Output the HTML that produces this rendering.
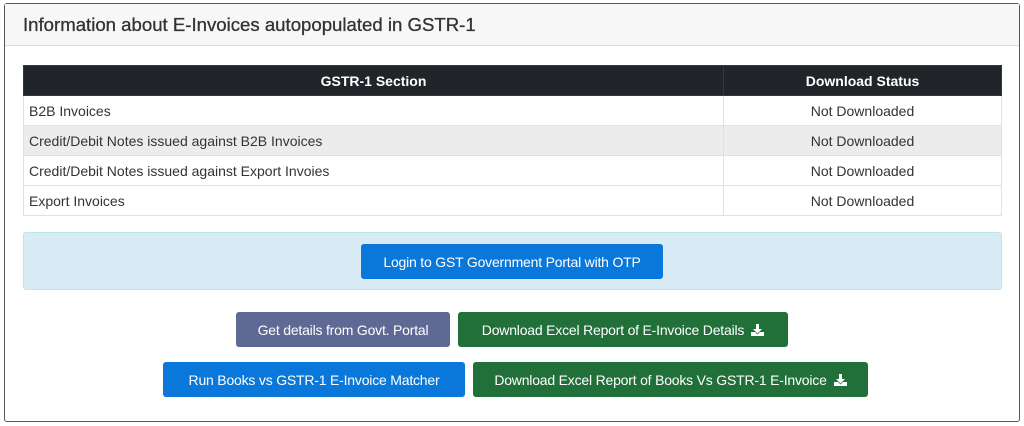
<!DOCTYPE html>
<html><head><style>
*{box-sizing:border-box;margin:0;padding:0}
body{width:1024px;height:426px;background:#fff;font-family:"Liberation Sans",Arial,sans-serif;position:relative;overflow:hidden}
.card{position:absolute;left:4px;top:3px;width:1016px;height:419px;border:1px solid #555;border-radius:3px}
.hd{position:absolute;left:0;top:0;right:0;height:42px;background:#f7f7f7;border-bottom:1px solid #dcdcdc;font-size:18.6px;color:#333;padding:10px 0 0 18px;-webkit-text-stroke:0.3px #333}
table{position:absolute;left:23px;top:65px;width:979px;border-collapse:collapse;font-size:14px;color:#333}
th{background:#212529;color:#fff;height:30px;font-weight:bold;border:1px solid #32383e}
td{height:30px;border:1px solid #dee2e6;padding-left:5px}
td.c{text-align:center;padding:0}
tr.g td{background:#ececec}
.alert{position:absolute;left:23px;top:232px;width:979px;height:58px;background:#d9ecf6;border:1px solid #bee5eb;border-radius:3px}
.btn{position:absolute;height:35px;border-radius:3px;color:#fff;font-size:14px;display:flex;align-items:center;justify-content:center;letter-spacing:-0.2px}
.b{background:#0a78db}.gr{background:#21703a}.gy{background:#5e6994}
svg{margin-left:7px}
</style></head><body>
<div class="card"><div class="hd">Information about E-Invoices autopopulated in GSTR-1</div></div>
<table>
<tr><th style="width:700px">GSTR-1 Section</th><th>Download Status</th></tr>
<tr><td>B2B Invoices</td><td class="c">Not Downloaded</td></tr>
<tr class="g"><td>Credit/Debit Notes issued against B2B Invoices</td><td class="c">Not Downloaded</td></tr>
<tr><td>Credit/Debit Notes issued against Export Invoies</td><td class="c">Not Downloaded</td></tr>
<tr><td>Export Invoices</td><td class="c">Not Downloaded</td></tr>
</table>
<div class="alert"></div>
<div class="btn b" style="left:361px;top:244px;width:302px">Login to GST Government Portal with OTP</div>
<div class="btn gy" style="left:236px;top:312px;width:214px">Get details from Govt. Portal</div>
<div class="btn gr" style="left:458px;top:312px;width:330px">Download Excel Report of E-Invoice Details<svg width="13" height="12" viewBox="0 0 13 12"><path d="M5 0h3v5h3L6.5 9.5 2 5h3z M0 8h4l2.5 2.5L9 8h4v4H0z" fill="#fff"/></svg></div>
<div class="btn b" style="left:163px;top:362px;width:302px">Run Books vs GSTR-1 E-Invoice Matcher</div>
<div class="btn gr" style="left:473px;top:362px;width:395px">Download Excel Report of Books Vs GSTR-1 E-Invoice<svg width="13" height="12" viewBox="0 0 13 12"><path d="M5 0h3v5h3L6.5 9.5 2 5h3z M0 8h4l2.5 2.5L9 8h4v4H0z" fill="#fff"/></svg></div>
</body></html>
